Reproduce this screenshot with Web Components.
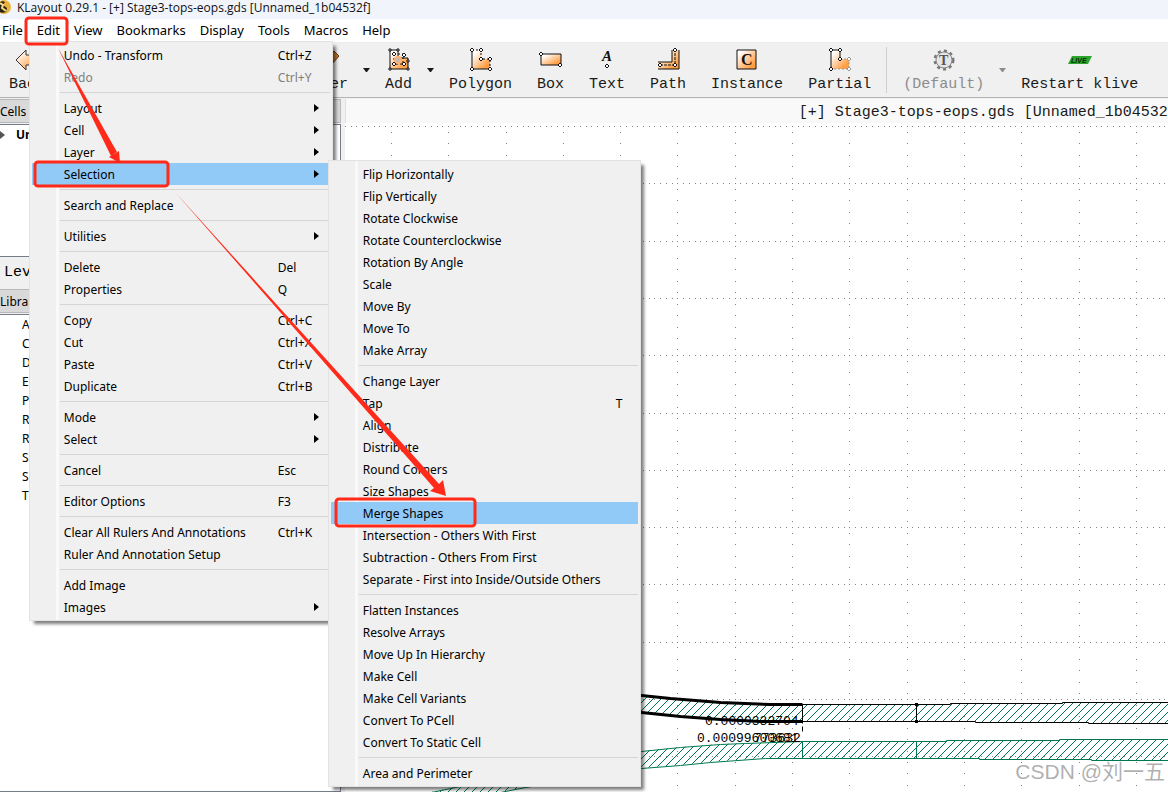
<!DOCTYPE html>
<html lang="en">
<head>
<meta charset="utf-8">
<title>KLayout 0.29.1</title>
<style>
    html, body {
        margin: 0;
        height: 100%;
        overflow: hidden;
        background: #f0f0f0;
    }
</style>
</head>
<body>
<kl-window></kl-window>

<script>
// helper: every component sets its style + markup the same way
class KlElement extends HTMLElement {
    constructor(){
        super();
        this.attachShadow({mode: 'open'});
        this._sDOM = this.shadowRoot;
    }
    render(style, html){
        this._sDOM.innerHTML = `<style>${style}</style>${html}`;
    }
}

/* ---------- title bar ---------- */
class KlTitlebar extends KlElement {
    connectedCallback(){
        this.render(`
            :host {
                display: flex;
                align-items: center;
                gap: 5px;
                height: 19px;
                background: #f1f5fb;
                color: #111;
                font: 12px/16px "Open Sans", sans-serif;
                white-space: nowrap;
            }
            svg { flex: none; margin-bottom: 4px; }
            span { margin-bottom: 3px; }
        `, `
            <svg width="12" height="15" viewBox="0 0 12 15">
                <circle cx="4" cy="7" r="7" fill="#e9b23c"/>
                <path d="M-1 3Q2 0 5 2L3 5L7 8L6 12Q0 14 -3 10Z" fill="#2b2415"/>
                <path d="M0 3L3 5L2 8L6 11" stroke="#f6dc8c" stroke-width="2" fill="none"/>
            </svg>
            <span><slot></slot></span>
        `);
    }
}
customElements.define('kl-titlebar', KlTitlebar);

/* ---------- menu bar ---------- */
class KlMenubar extends KlElement {
    connectedCallback(){
        this.render(`
            :host {
                display: flex;
                height: 23px;
                margin-left: -5px;
                background: #fff;
                border-bottom: 1px solid #ececec;
                font-size: 13px;
            }
        `, `<slot></slot>`);
    }
}
customElements.define('kl-menubar', KlMenubar);

class KlMenubarEntry extends KlElement {
    connectedCallback(){
        this.render(`
            :host { display: block; position: relative; }
            button {
                box-sizing: border-box;
                height: 23px;
                padding: 0 7px 2px;
                border: 0;
                background: none;
                color: #000;
                font: inherit;
                line-height: 20px;
                white-space: nowrap;
            }
            ::slotted(kl-menu) {
                position: absolute;
                left: -1px;
                top: calc(100% - 1px);
                z-index: 10;
            }
        `, `<button type="button">${this.getAttribute('label')}</button><slot></slot>`);
    }
}
customElements.define('kl-menubar-entry', KlMenubarEntry);

/* ---------- popup menu ---------- */
class KlMenu extends KlElement {
    connectedCallback(){
        this.render(`
            :host {
                display: flex;
                flex-direction: column;
                box-sizing: border-box;
                padding: 2px;
                border: 1px solid #e2e2e2;
                background: linear-gradient(to right, transparent 26px, #f9f9f9 26px, #f9f9f9 29px, transparent 29px), #f0f0f0;
                background-clip: padding-box;
                box-shadow: 4px 4px 3px -1px rgba(0,0,0,0.5);
                font-size: 12px;
            }
            :host([size=edit]) { width: 304px; --keys: 52px; }
            :host([size=selection]) { width: 313px; --keys: 22px; }
        `, `<slot></slot>`);
    }
}
customElements.define('kl-menu', KlMenu);

class KlItem extends KlElement {
    connectedCallback(){
        const keys = this.getAttribute('keys');
        const arrow = this.hasAttribute('more')
            ? `<svg width="5" height="8" viewBox="0 0 5 8"><path d="M0 0L5 4L0 8Z"/></svg>` : '';
        this.render(`
            :host { display: block; position: relative; }
            button {
                display: flex;
                align-items: center;
                box-sizing: border-box;
                width: 100%;
                height: 22px;
                padding: 2px 0 0 32px;
                border: 0;
                background: none;
                color: #000;
                font: inherit;
                line-height: 20px;
                text-align: left;
                white-space: nowrap;
            }
            :host([disabled]) button { color: #7f7f7f; }
            :host([active]) button { background: #91c9f7; }
            .text { flex: 1; }
            .keys { width: var(--keys); }
            svg { margin: 0 11px 2px 0; }
            ::slotted(kl-menu) {
                position: absolute;
                left: calc(100% - 2px);
                top: -3px;
                z-index: 11;
            }
        `, `
            <button type="button" ${this.hasAttribute('disabled') ? 'disabled' : ''}>
                <span class="text"><slot></slot></span>
                ${keys ? `<span class="keys">${keys}</span>` : ''}
                ${arrow}
            </button>
            <slot name="submenu"></slot>
        `);
    }
}
customElements.define('kl-item', KlItem);

class KlSeparator extends KlElement {
    connectedCallback(){
        this.render(`
            :host {
                display: block;
                height: 1px;
                margin: 4px 0 4px 28px;
                background: #d5d5d5;
            }
        `, '');
    }
}
customElements.define('kl-separator', KlSeparator);

/* ---------- toolbar ---------- */
const node = (x, y, c = '#111') => `<path d="M${x} ${y - 2}L${x + 2} ${y}L${x} ${y + 2}L${x - 2} ${y}Z" fill="#fff" stroke="${c}"/>`;
const ICONS = {
    back: `<path d="M1 12L11 2V7H23V17H11V22Z" fill="url(#g)" stroke="#333"/>`,
    ruler: `<path d="M7 20L20 3L25 8L12 23Z" fill="#c9762b" stroke="#6b3d12"/>`,
    add: `<path d="M3 2H11V10H21V21H3Z" fill="url(#g)" stroke="#111"/>
        <path d="M7 6H16V16H7Z" fill="none" stroke="#111" stroke-dasharray="2 2"/><circle cx="11" cy="12" r="4" fill="#ffb070"/><circle cx="11" cy="12" r="2" fill="#bbb"/>
        ${node(7, 6)}${node(17, 7)}${node(7, 16)}${node(17, 16)}
        <path d="M2 1h2v2h-2zM10 1h2v2h-2zM20 12h2v2h-2zM2 20h2v2h-2zM20 20h2v2h-2z" fill="#fff" stroke="#111"/>`,
    polygon: `<path d="M3 2V21H21V11H12V2Z" fill="url(#g)"/><path d="M3 2V21H21" fill="none" stroke="#111"/>
        <path d="M3 2H12V11H21V21" fill="none" stroke="#111" stroke-dasharray="2 2"/>
        ${node(3, 2)}${node(12, 2)}${node(12, 11)}${node(21, 11)}${node(3, 21)}${node(21, 21)}`,
    box: `<path d="M2 6H22V17H2Z" fill="url(#g)" stroke="#111" stroke-width="1"/>${node(2, 6)}${node(21, 17)}`,
    text: `<text x="7" y="13" font-family="Liberation Serif, serif" font-size="15" font-weight="bold" font-style="italic" fill="#111">A</text>${node(12, 18)}`,
    path: `<path d="M16 2H23V21H2V14H16Z" fill="url(#g)"/><path d="M23 2V21H2M2 14H16V2" fill="none" stroke="#111"/>
        <path d="M4 17H19V3" fill="none" stroke="#111" stroke-dasharray="3 1"/>${node(4, 17)}${node(19, 17)}${node(19, 2)}`,
    instance: `<path d="M2 2H21V21H2Z" fill="url(#g)" stroke="#111"/>
        <text x="6" y="17" font-family="Liberation Serif, serif" font-size="16" font-weight="bold" fill="#111">C</text>`,
    partial: `<path d="M3 2V21H21V11H12V2Z" fill="url(#g)"/><path d="M3 21V2H12V11" fill="none" stroke="#111"/>
        <path d="M12 11H21V21H3" fill="none" stroke="#999" stroke-dasharray="2 2"/>
        ${node(3, 2)}${node(12, 2)}${node(12, 11)}${node(21, 11, '#999')}${node(3, 21)}${node(21, 21, '#999')}`,
    tech: `<circle cx="12" cy="12" r="9" fill="#e2e2e2" stroke="#777" stroke-width="3" stroke-dasharray="3 3"/>
        <circle cx="12" cy="12" r="8" fill="#e6e6e6" stroke="#888"/>
        <text x="7" y="17" font-family="Liberation Serif, serif" font-size="14" font-weight="bold" fill="#555">T</text>`,
    live: `<path d="M4 8H24L20 16H0Z" fill="#2ca52c"/>
        <text x="3" y="15" font-family="Liberation Sans, sans-serif" font-size="7" font-weight="bold" font-style="italic" fill="#052d05">LIVE</text>`
};

class KlTool extends KlElement {
    connectedCallback(){
        const drop = this.hasAttribute('drop')
            ? `<svg class="drop" width="7" height="4" viewBox="0 0 7 4"><path d="M0 0H7L4 4H3Z" fill="currentColor"/></svg>` : '';
        this.render(`
            :host { display: flex; flex: none; color: #1a1a1a; }
            :host([disabled]) { color: #8c8c8c; }
            button {
                display: flex;
                flex-direction: column;
                align-items: center;
                padding: 5px 12px 0;
                border: 0;
                background: none;
                color: inherit;
                font: 15px/20px "Liberation Mono", monospace;
                white-space: nowrap;
            }
            .icon { margin-bottom: 3px; overflow: visible; }
            .drop { margin: 25px 2px 0 3px; }
        `, `
            <button type="button" ${this.hasAttribute('disabled') ? 'disabled' : ''}>
                <svg class="icon" width="24" height="24" viewBox="0 0 24 24">
                    <defs><linearGradient id="g" x1="0" y1="0" x2="1" y2="1">
                        <stop offset=".15" stop-color="#fff"/><stop offset=".8" stop-color="#ff9f45"/>
                    </linearGradient></defs>
                    ${ICONS[this.getAttribute('icon')]}
                </svg>
                <slot></slot>
            </button>
            ${drop}
        `);
    }
}
customElements.define('kl-tool', KlTool);

class KlToolbar extends KlElement {
    connectedCallback(){
        this.render(`
            :host {
                display: flex;
                gap: 1px;
                height: 54px;
                margin-left: -3px;
                background: #f0f0f0;
                border-bottom: 1px solid #b4b4b4;
            }
            .hidden-tools { flex: 0 0 232px; }
            .rule { flex: none; width: 1px; margin: 4px 3px 4px 2px; background: #cfcfcf; }
        `, `
            <kl-tool icon="back">Back</kl-tool>
            <span class="hidden-tools"></span>
            <kl-tool icon="ruler" drop>Ruler</kl-tool>
            <kl-tool icon="add" drop>Add</kl-tool>
            <kl-tool icon="polygon">Polygon</kl-tool>
            <kl-tool icon="box">Box</kl-tool>
            <kl-tool icon="text">Text</kl-tool>
            <kl-tool icon="path">Path</kl-tool>
            <kl-tool icon="instance">Instance</kl-tool>
            <kl-tool icon="partial">Partial</kl-tool>
            <span class="rule"></span>
            <kl-tool icon="tech" drop disabled>(Default)</kl-tool>
            <kl-tool icon="live">Restart klive</kl-tool>
        `);
    }
}
customElements.define('kl-toolbar', KlToolbar);

/* ---------- left side docks ---------- */
class KlDock extends KlElement {
    connectedCallback(){
        this.render(`
            :host { display: flex; flex-direction: column; }
            header {
                height: 22px;
                border: 1px solid #b8b8b8;
                border-left: 0;
                margin-bottom: 1px;
                background: #d9d9d9;
                line-height: 24px;
            }
            .body {
                flex: 1;
                border: 1px solid #767c88;
                border-left: 0;
                background: #fff;
                overflow: hidden;
            }
        `, `<header>${this.getAttribute('label')}</header><div class="body"><slot></slot></div>`);
    }
}
customElements.define('kl-dock', KlDock);

class KlSide extends KlElement {
    connectedCallback(){
        const libs = ['ARC', 'CIRCLE', 'DONUT', 'ELLIPSE', 'PIE', 'ROUND_PATH', 'ROUND_POLYGON', 'SBOX', 'SPOLYGON', 'TEXT'];
        this.render(`
            :host { display: flex; flex-direction: column; padding-top: 1px; }
            kl-dock.cells { flex: 0 0 158px; }
            kl-dock.libs { flex: 1; }
            .cell { display: flex; align-items: center; gap: 11px; height: 20px; font-weight: bold; }
            .levels { height: 32px; padding-left: 4px; font: 15px/32px "Liberation Mono", monospace; }
            ul { margin: 0; padding: 0 0 0 22px; list-style: none; }
            li { line-height: 19px; }
        `, `
            <kl-dock class="cells" label="Cells">
                <div class="cell"><svg width="5" height="8"><path d="M0 0L5 4L0 8Z" fill="#555"/></svg>Un</div>
            </kl-dock>
            <div class="levels">Level</div>
            <kl-dock class="libs" label="Libraries">
                <ul>${libs.map(l => `<li>${l}</li>`).join('')}</ul>
            </kl-dock>
        `);
    }
}
customElements.define('kl-side', KlSide);

/* ---------- layout view ---------- */
class KlView extends KlElement {
    // dotted grid, dots snapped to whole pixels
    grid(){
        const step = 57.3;
        let d = '';
        for (let y = 126; y < 1400; y += step)
            for (let x = 345; x < 2200; x += step / 10) d += `M${Math.round(x)} ${Math.round(y)}h1v1h-1z`;
        for (let x = 391; x < 2200; x += step)
            for (let y = 126 + step / 10; y < 1400; y += step / 5) d += `M${Math.round(x)} ${Math.round(y)}h1v1h-1z`;
        return d;
    }
    // one pixel per row, so the diagonal stays thin
    hatch(){
        let d = '';
        for (let i = 0; i < 8; i++) d += `M${7 - i} ${i}h1v1h-1z`;
        return d;
    }
    connectedCallback(){
        const black = 'M560 686L641 695L670 698L720 702L770 704L802 704H950V703H1062V702H2000V723H1088V722H975V721H802L760 721L720 719L680 716L641 712L560 702Z';
        const green = 'M431 792L455 787L540 766L641 751L680 747L720 744L745 743L802 741H946V740H1059V739H2000V760H1091V759H979V758H765L710 762L680 765L641 768L525 787L500 792Z';
        this.render(`
            :host { display: flex; flex-direction: column; overflow: hidden; }
            .tab {
                height: 24px;
                margin-top: 1px;
                padding-left: 55%;
                background: #f9f9f9;
                border-left: 1px solid #e0e0e0;
                color: #1a1a1a;
                font: 15px/28px "Liberation Mono", monospace;
                white-space: nowrap;
            }
            .view { flex: 1; background: #fff; overflow: hidden; }
            svg { display: block; width: 100%; height: 100%; }
        `, `
            <div class="tab"><slot></slot></div>
            <div class="view">
                <svg>
                    <defs><pattern id="hatch" width="8" height="8" patternUnits="userSpaceOnUse">
                        <path d="${this.hatch()}" fill="#00784f" shape-rendering="crispEdges"/>
                    </pattern></defs>
                    <g transform="translate(-345 -123)">
                        <path d="${this.grid()}" fill="#858585" shape-rendering="crispEdges"/>
                        <path d="${black}" fill="url(#hatch)"/>
                        <path d="${green}" fill="url(#hatch)"/>
                        <g fill="none" transform="translate(.5 .5)">
                            <path d="${black}" stroke="#000"/>
                            <path d="M560 686L641 695L670 698L720 702L770 704L802 704M560 702L641 712L680 716L720 719L760 721L802 721" stroke="#000" stroke-width="3"/>
                            <path d="M802 704V723M802 726V731M916 704V721" stroke="#000"/>
                            <path d="${green}" stroke="#00784f"/>
                            <path d="M802 741V758M916 741V758" stroke="#00784f"/>
                        </g>
                        <path d="M915 703h3v3h-3zM915 720h3v3h-3z"/>
                        <g font-family="Liberation Mono, monospace" font-size="13" fill="#000">
                            <text x="705" y="725">0.0009332704</text>
                            <text x="697" y="742">0.00099600681</text>
                            <text x="754" y="742">773632</text>
                        </g>
                    </g>
                </svg>
            </div>
        `);
    }
}
customElements.define('kl-view', KlView);

/* ---------- red marks drawn on top ---------- */
class KlMarks extends KlElement {
    connectedCallback(){
        this.render(`
            :host { display: block; position: absolute; inset: 0; z-index: 20; pointer-events: none; }
            svg { width: 100%; height: 100%; }
            .stamp {
                position: absolute;
                right: 3px;
                bottom: 5px;
                color: rgba(150,150,150,0.75);
                font: 21px/30px "Liberation Sans", "Noto Sans CJK SC", sans-serif;
                text-shadow: 1px 1px 1px #fff;
            }
        `, `
            <svg>
                <g fill="none" stroke="#ff2a1a" stroke-width="3">
                    <rect x="26" y="18" width="41" height="26" rx="3"/>
                    <rect x="35" y="162" width="133" height="24" rx="3"/>
                    <rect x="336" y="499" width="139" height="27" rx="3"/>
                </g>
                <g fill="#ff2a1a">
                    <path d="M58 48L114 154L119 151L120 163L109 157L112 155Z"/>
                    <path d="M58 48L117 152L111 156Z"/>
                    <path d="M175 192L439 484L443 480L446 496L430 491L434 488Z"/>
                </g>
            </svg>
            <div class="stamp">CSDN @刘一五</div>
        `);
    }
}
customElements.define('kl-marks', KlMarks);

/* ---------- main window ---------- */
class KlWindow extends KlElement {
    // '-' is a separator, [label, keys, flag] is an entry
    items(list){
        return list.map(i => {
            if (i === '-') return '<kl-separator></kl-separator>';
            const [label, keys, flag] = [].concat(i);
            return `<kl-item ${keys ? `keys="${keys}"` : ''} ${flag || ''}>${label}${flag === 'more active' ? this.selection() : ''}</kl-item>`;
        }).join('');
    }
    selection(){
        return `<kl-menu slot="submenu" size="selection">${this.items([
            'Flip Horizontally', 'Flip Vertically', 'Rotate Clockwise', 'Rotate Counterclockwise', 'Rotation By Angle',
            'Scale', 'Move By', 'Move To', 'Make Array', '-',
            'Change Layer', ['Tap', 'T'], 'Align', 'Distribute', 'Round Corners', 'Size Shapes', ['Merge Shapes', '', 'active'],
            'Intersection - Others With First', 'Subtraction - Others From First', 'Separate - First into Inside/Outside Others', '-',
            'Flatten Instances', 'Resolve Arrays', 'Move Up In Hierarchy', 'Make Cell', 'Make Cell Variants',
            'Convert To PCell', 'Convert To Static Cell', '-',
            'Area and Perimeter'
        ])}</kl-menu>`;
    }
    edit(){
        return `<kl-menu size="edit">${this.items([
            ['Undo - Transform', 'Ctrl+Z'], ['Redo', 'Ctrl+Y', 'disabled'], '-',
            ['Layout', '', 'more'], ['Cell', '', 'more'], ['Layer', '', 'more'], ['Selection', '', 'more active'], '-',
            'Search and Replace', '-',
            ['Utilities', '', 'more'], '-',
            ['Delete', 'Del'], ['Properties', 'Q'], '-',
            ['Copy', 'Ctrl+C'], ['Cut', 'Ctrl+X'], ['Paste', 'Ctrl+V'], ['Duplicate', 'Ctrl+B'], '-',
            ['Mode', '', 'more'], ['Select', '', 'more'], '-',
            ['Cancel', 'Esc'], '-',
            ['Editor Options', 'F3'], '-',
            ['Clear All Rulers And Annotations', 'Ctrl+K'], 'Ruler And Annotation Setup', '-',
            'Add Image', ['Images', '', 'more']
        ])}</kl-menu>`;
    }
    connectedCallback(){
        const menus = ['File', 'Edit', 'View', 'Bookmarks', 'Display', 'Tools', 'Macros', 'Help'];
        this.render(`
            :host {
                display: flex;
                flex-direction: column;
                position: relative;
                height: 100vh;
                overflow: hidden;
                font: 12px/16px "Noto Sans", sans-serif;
                color: #000;
            }
            main { flex: 1; display: flex; gap: 4px; min-height: 0; }
            kl-side { flex: 0 0 341px; }
            kl-view { flex: 1; min-width: 0; }
        `, `
            <kl-titlebar>KLayout 0.29.1 - [+] Stage3-tops-eops.gds [Unnamed_1b04532f]</kl-titlebar>
            <kl-menubar>
                ${menus.map(m => `<kl-menubar-entry label="${m}">${m === 'Edit' ? this.edit() : ''}</kl-menubar-entry>`).join('')}
            </kl-menubar>
            <kl-toolbar></kl-toolbar>
            <main>
                <kl-side></kl-side>
                <kl-view>[+] Stage3-tops-eops.gds [Unnamed_1b04532f]</kl-view>
            </main>
            <kl-marks></kl-marks>
        `);
    }
}
customElements.define('kl-window', KlWindow);
</script>
</body>
</html>
